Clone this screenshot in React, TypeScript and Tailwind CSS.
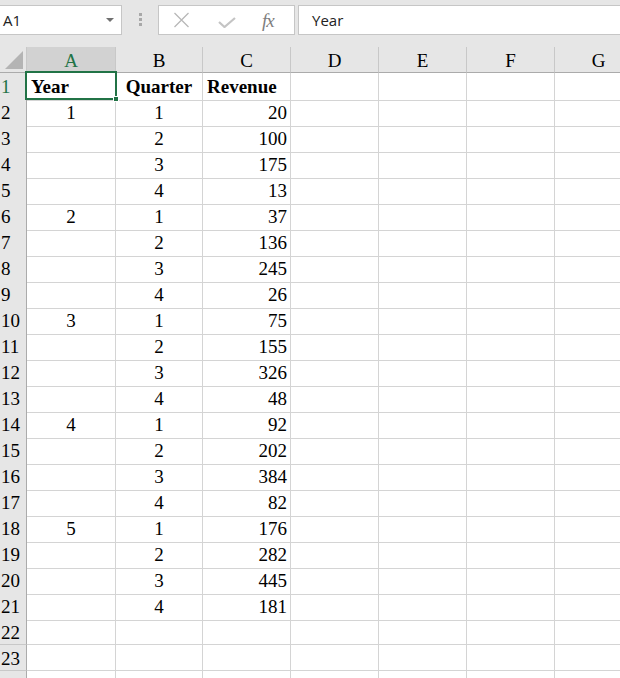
import React from "react";

const revenue = [20, 100, 175, 13, 37, 136, 245, 26, 75, 155, 326, 48, 92, 202, 384, 82, 176, 282, 445, 181];

type Row = { a: string; b: string; c: string; bold?: boolean };

const rows: Row[] = [{ a: "Year", b: "Quarter", c: "Revenue", bold: true }];
for (let i = 0; i < 20; i++) {
  rows.push({
    a: i % 4 === 0 ? String(i / 4 + 1) : "",
    b: String((i % 4) + 1),
    c: String(revenue[i]),
  });
}
rows.push({ a: "", b: "", c: "" });
rows.push({ a: "", b: "", c: "" });
rows.push({ a: "", b: "", c: "" });

const cols = ["A", "B", "C", "D", "E", "F", "G"];
const gridCols = "grid grid-cols-[27px_89px_87px_88px_88px_88px_88px_88px]";

export default function App() {
  return (
    <div className="w-[620px] h-[678px] overflow-hidden bg-white font-['Liberation_Serif',serif] text-black">
      {/* Formula bar */}
      <div className="h-[47px] bg-[#e6e6e6] flex items-start pt-[5px] font-['Open_Sans','Noto_Sans',sans-serif]">
        <div className="ml-[-1px] w-[123px] h-[30px] bg-white border border-[#c6c6c6] flex items-center justify-between pl-[3px] pr-[7px]">
          <span className="text-[15px] text-[#222] leading-none">A1</span>
          <svg width="8" height="5" viewBox="0 0 8 5">
            <path d="M0 0 L8 0 L4 4 Z" fill="#707070" />
          </svg>
        </div>
        <div className="ml-[17px] mt-[8px] flex flex-col gap-[2px]">
          <div className="w-[3px] h-[3px] bg-[#a8a8a8]" />
          <div className="w-[3px] h-[3px] bg-[#a8a8a8]" />
          <div className="w-[3px] h-[3px] bg-[#a8a8a8]" />
        </div>
        <div className="ml-[16px] w-[137px] h-[30px] bg-white border border-[#c6c6c6] flex items-center">
          <svg className="ml-[14px]" width="17" height="16" viewBox="0 0 17 16">
            <path d="M1.5 1 L15.5 15 M15.5 1 L1.5 15" stroke="#b8b8b8" strokeWidth="1.3" fill="none" />
          </svg>
          <svg className="ml-[28px] mt-[5px]" width="18" height="11" viewBox="0 0 18 11">
            <path d="M1 5 L6.5 10 L17 1" stroke="#c4c4c4" strokeWidth="2.2" fill="none" />
          </svg>
          <span className="ml-[26px] text-[19px] italic text-[#7e7e7e] font-['Liberation_Serif',serif] leading-none tracking-[-1px]">
            fx
          </span>
        </div>
        <div className="ml-[3px] flex-1 h-[30px] bg-white border border-[#c6c6c6] border-r-0 flex items-center pl-[13px]">
          <span className="text-[15px] text-[#222] leading-none">Year</span>
        </div>
      </div>

      {/* Grid */}
      <div className="relative">
        {/* Column headers */}
        <div className={`${gridCols} h-[26px] bg-[#e6e6e6]`}>
          <div className="border-r border-r-[#c8c8c8] border-b border-b-[#ababab] relative flex items-end justify-end pr-[3px] pb-[3px]">
            <svg width="18" height="18" viewBox="0 0 18 18">
              <path d="M18 0 L18 18 L0 18 Z" fill="#b4b4b4" />
            </svg>
          </div>
          {cols.map((c, i) => (
            <div
              key={c}
              className={`border-b border-b-[#ababab] border-r border-r-[#c8c8c8] flex items-center justify-center pt-[1px] text-[19px] leading-none ${
                i === 0 ? "bg-[#d2d2d2] text-[#217346]" : ""
              }`}
            >
              {c}
            </div>
          ))}
        </div>

        {rows.map((r, idx) => (
          <div key={idx} className={`${gridCols} h-[26px]`}>
            <div
              className={`bg-[#e6e6e6] border-r border-r-[#ababab] border-b border-b-[#c8c8c8] text-[19px] leading-[27px] pl-[1px] overflow-hidden whitespace-nowrap ${
                idx === 0 ? "text-[#217346]" : ""
              }`}
            >
              {idx < 23 ? idx + 1 : ""}
            </div>
            <div
              className={`border-r border-b border-[#d4d4d4] text-[19px] leading-[27px] whitespace-nowrap ${
                r.bold ? "font-bold text-left pl-[4px]" : "text-center"
              }`}
            >
              {r.a}
            </div>
            <div
              className={`border-r border-b border-[#d4d4d4] text-[19px] leading-[27px] text-center whitespace-nowrap ${
                r.bold ? "font-bold" : ""
              }`}
            >
              {r.b}
            </div>
            <div
              className={`border-r border-b border-[#d4d4d4] text-[19px] leading-[27px] whitespace-nowrap ${
                r.bold ? "font-bold text-left pl-[4px]" : "text-right pr-[3px]"
              }`}
            >
              {r.c}
            </div>
            <div className="border-r border-b border-[#d4d4d4]" />
            <div className="border-r border-b border-[#d4d4d4]" />
            <div className="border-r border-b border-[#d4d4d4]" />
            <div className="border-r border-b border-[#d4d4d4]" />
          </div>
        ))}

        {/* Selection of A1 */}
        <div className="absolute left-[25px] top-[24px] w-[92px] h-[29px] border-2 border-[#217346] pointer-events-none">
          <div className="absolute right-[-4px] bottom-[-4px] w-[6px] h-[6px] bg-[#217346] border border-white" />
        </div>
      </div>
    </div>
  );
}
